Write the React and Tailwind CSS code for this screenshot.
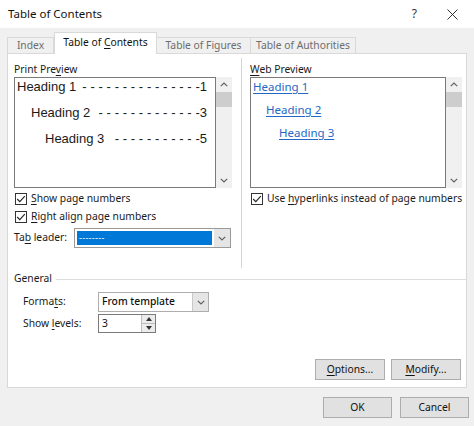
import React from "react";

const UI = "font-['Noto_Sans',sans-serif]";

function U({ children }) {
  return <span className="underline decoration-1 underline-offset-[2px]">{children}</span>;
}

function ChevronUp() {
  return (
    <svg width="8" height="5" viewBox="0 0 8 5">
      <path d="M0.8 4.2 L4 1 L7.2 4.2" fill="none" stroke="#606060" strokeWidth="1.2" />
    </svg>
  );
}

function ChevronDown({ color = "#606060" }) {
  return (
    <svg width="8" height="5" viewBox="0 0 8 5">
      <path d="M0.8 0.8 L4 4 L7.2 0.8" fill="none" stroke={color} strokeWidth="1.2" />
    </svg>
  );
}

function Scrollbar() {
  return (
    <div className="w-[16px] bg-[#f0f0f0] flex flex-col">
      <div className="h-[15px] flex items-center justify-center">
        <ChevronUp />
      </div>
      <div className="h-[15px] bg-[#cdcdcd]" />
      <div className="flex-1" />
      <div className="h-[15px] flex items-center justify-center">
        <ChevronDown />
      </div>
    </div>
  );
}

function Check({ children }) {
  return (
    <div className="flex items-center gap-[4px] h-[16px]">
      <span className="ml-px w-[12px] h-[12px] shrink-0 border border-[#333] bg-white flex items-center justify-center">
        <svg width="10" height="10" viewBox="0 0 10 10">
          <path d="M1.2 5 L3.8 7.6 L8.8 2.2" fill="none" stroke="#222" strokeWidth="1.1" />
        </svg>
      </span>
      <span className="whitespace-nowrap">{children}</span>
    </div>
  );
}

function TocLine({ indent, label, count, page }) {
  return (
    <div className={`flex h-[16px] leading-[16px] pr-[8px] ${indent}`}>
      <span className="whitespace-nowrap">{label}</span>
      <span className="flex-1 min-w-0 flex justify-end whitespace-nowrap">
        <span className="tracking-[3.75px]">{"-".repeat(count - 1)}</span>
        <span>-</span>
      </span>
      <span>{page}</span>
    </div>
  );
}

function Button({ children, w }) {
  return (
    <div className={`${w} h-[21px] bg-[#e1e1e1] border border-[#adadad] flex items-center justify-center text-[#111]`}>
      <span>{children}</span>
    </div>
  );
}

export default function App() {
  return (
    <div className={`${UI} w-[474px] h-[426px] bg-[#f0f0f0] flex flex-col text-[10.3px] text-[#1a1a1a] overflow-hidden`}>
      {/* Title bar */}
      <div className="h-[28px] bg-white flex items-center pl-[8px] pr-[16px]">
        <span className="text-[11.5px] text-[#111]">Table of Contents</span>
        <span className="ml-auto text-[12px] text-[#333]">?</span>
        <svg className="ml-[30px]" width="11" height="11" viewBox="0 0 11 11">
          <path d="M0.5 0.5 L10.5 10.5 M10.5 0.5 L0.5 10.5" stroke="#333" strokeWidth="1" />
        </svg>
      </div>

      {/* Tabs */}
      <div className="h-[26px] px-[7px] flex items-end">
        <div className="w-[47px] h-[17px] border border-b-0 border-[#d9d9d9] flex items-center justify-center text-[#6d6d6d]">
          <span>Index</span>
        </div>
        <div className="relative z-10 w-[103px] h-[22px] bg-white border border-b-0 border-[#d9d9d9] flex items-center justify-center text-[#111] pb-[2px]">
          <span>
            Table of <U>C</U>ontents
          </span>
        </div>
        <div className="w-[94px] h-[17px] border border-b-0 border-l-0 border-[#d9d9d9] flex items-center justify-center text-[#6d6d6d]">
          <span>Table of Figures</span>
        </div>
        <div className="w-[105px] h-[17px] border border-b-0 border-l-0 border-[#d9d9d9] flex items-center justify-center text-[#6d6d6d]">
          <span>Table of Authorities</span>
        </div>
      </div>

      {/* Panel */}
      <div className="-mt-px mx-[7px] h-[335px] bg-white border border-[#d9d9d9] flex flex-col">
        <div className="flex h-[214px]">
          {/* Print preview */}
          <div className="ml-[6px] w-[218px] pt-[7px] flex flex-col">
            <div className="h-[16px] leading-[16px]">
              Print Pre<U>v</U>iew
            </div>
            <div className="flex h-[111px]">
              <div className="w-[202px] border border-[#7a7a7a] pl-[2px] flex flex-col gap-[10px] font-['Liberation_Sans',Arial,sans-serif] text-[13px] text-[#1a1a1a] pt-px">
                <TocLine indent="" label="Heading 1" count={15} page="1" />
                <TocLine indent="pl-[14px]" label="Heading 2" count={13} page="3" />
                <TocLine indent="pl-[28px]" label="Heading 3" count={11} page="5" />
              </div>
              <Scrollbar />
            </div>
            <div className="mt-[3px] flex flex-col gap-[2px]">
              <Check>
                <U>S</U>how page numbers
              </Check>
              <Check>
                <U>R</U>ight align page numbers
              </Check>
            </div>
            <div className="mt-[3px] flex items-center h-[20px]">
              <span className="w-[60px]">
                Ta<U>b</U> leader:
              </span>
              <div className="w-[157px] h-[20px] border border-[#9a9a9a] flex">
                <div className="flex-1 m-[2px] bg-[#0078d7] text-white text-[9px] leading-[13px] pl-[2px] tracking-[0.3px]">
                  --------
                </div>
                <div className="w-[16px] bg-[#e5e5e5] flex items-center justify-center">
                  <ChevronDown />
                </div>
              </div>
            </div>
          </div>

          {/* Separator */}
          <div className="ml-[9px] mt-[4px] w-px bg-[#d4d4d4]" />

          {/* Web preview */}
          <div className="ml-[8px] w-[212px] pt-[7px] flex flex-col">
            <div className="h-[16px] leading-[16px]">
              <U>W</U>eb Preview
            </div>
            <div className="flex h-[111px]">
              <div className="w-[196px] border border-[#7a7a7a] pl-[2px] pt-px flex flex-col gap-[7px] text-[11.5px] text-[#2468c6]">
                <div className="h-[16px] leading-[16px] underline underline-offset-2">Heading 1</div>
                <div className="h-[16px] leading-[16px] underline underline-offset-2 pl-[13px]">Heading 2</div>
                <div className="h-[16px] leading-[16px] underline underline-offset-2 pl-[26px]">Heading 3</div>
              </div>
              <Scrollbar />
            </div>
            <div className="mt-[3px]">
              <Check>
                Use <U>h</U>yperlinks instead of page numbers
              </Check>
            </div>
          </div>
        </div>

        {/* General */}
        <div className="mt-[3px] ml-[6px] h-[16px] flex items-center">
          <span>General</span>
          <div className="ml-[4px] flex-1 h-px bg-[#dcdcdc]" />
        </div>
        <div className="mt-[5px] ml-[15px] h-[20px] flex items-center">
          <span className="w-[75px]">
            Forma<U>t</U>s:
          </span>
          <div className="w-[111px] h-[20px] border border-[#adadad] flex">
            <div className="flex-1 pl-[3px] flex items-center font-medium text-[#111]">
              <span>From template</span>
            </div>
            <div className="w-[16px] bg-[#e5e5e5] border-l border-[#c8c8c8] flex items-center justify-center">
              <ChevronDown />
            </div>
          </div>
        </div>
        <div className="mt-[2px] ml-[15px] h-[19px] flex items-center">
          <span className="w-[75px]">
            Show <U>l</U>evels:
          </span>
          <div className="w-[58px] h-[19px] border border-[#7a7a7a] flex">
            <div className="flex-1 pl-[3px] flex items-center text-[#111]">
              <span>3</span>
            </div>
            <div className="w-[14px] flex flex-col border-l border-[#bdbdbd]">
              <div className="flex-1 bg-[#ececec] border-b border-[#bdbdbd] flex items-center justify-center">
                <svg width="6" height="4" viewBox="0 0 6 4">
                  <path d="M0 4 L3 0 L6 4 Z" fill="#333" />
                </svg>
              </div>
              <div className="flex-1 bg-[#ececec] flex items-center justify-center">
                <svg width="6" height="4" viewBox="0 0 6 4">
                  <path d="M0 0 L3 4 L6 0 Z" fill="#333" />
                </svg>
              </div>
            </div>
          </div>
        </div>

        <div className="mt-auto mb-[7px] pr-[5px] flex justify-end gap-[6px]">
          <Button w="w-[70px]">
            <U>O</U>ptions...
          </Button>
          <Button w="w-[70px]">
            <U>M</U>odify...
          </Button>
        </div>
      </div>

      {/* Bottom buttons */}
      <div className="pt-[9px] pr-[5px] flex justify-end gap-[8px]">
        <Button w="w-[69px]">OK</Button>
        <Button w="w-[69px]">Cancel</Button>
      </div>
    </div>
  );
}
